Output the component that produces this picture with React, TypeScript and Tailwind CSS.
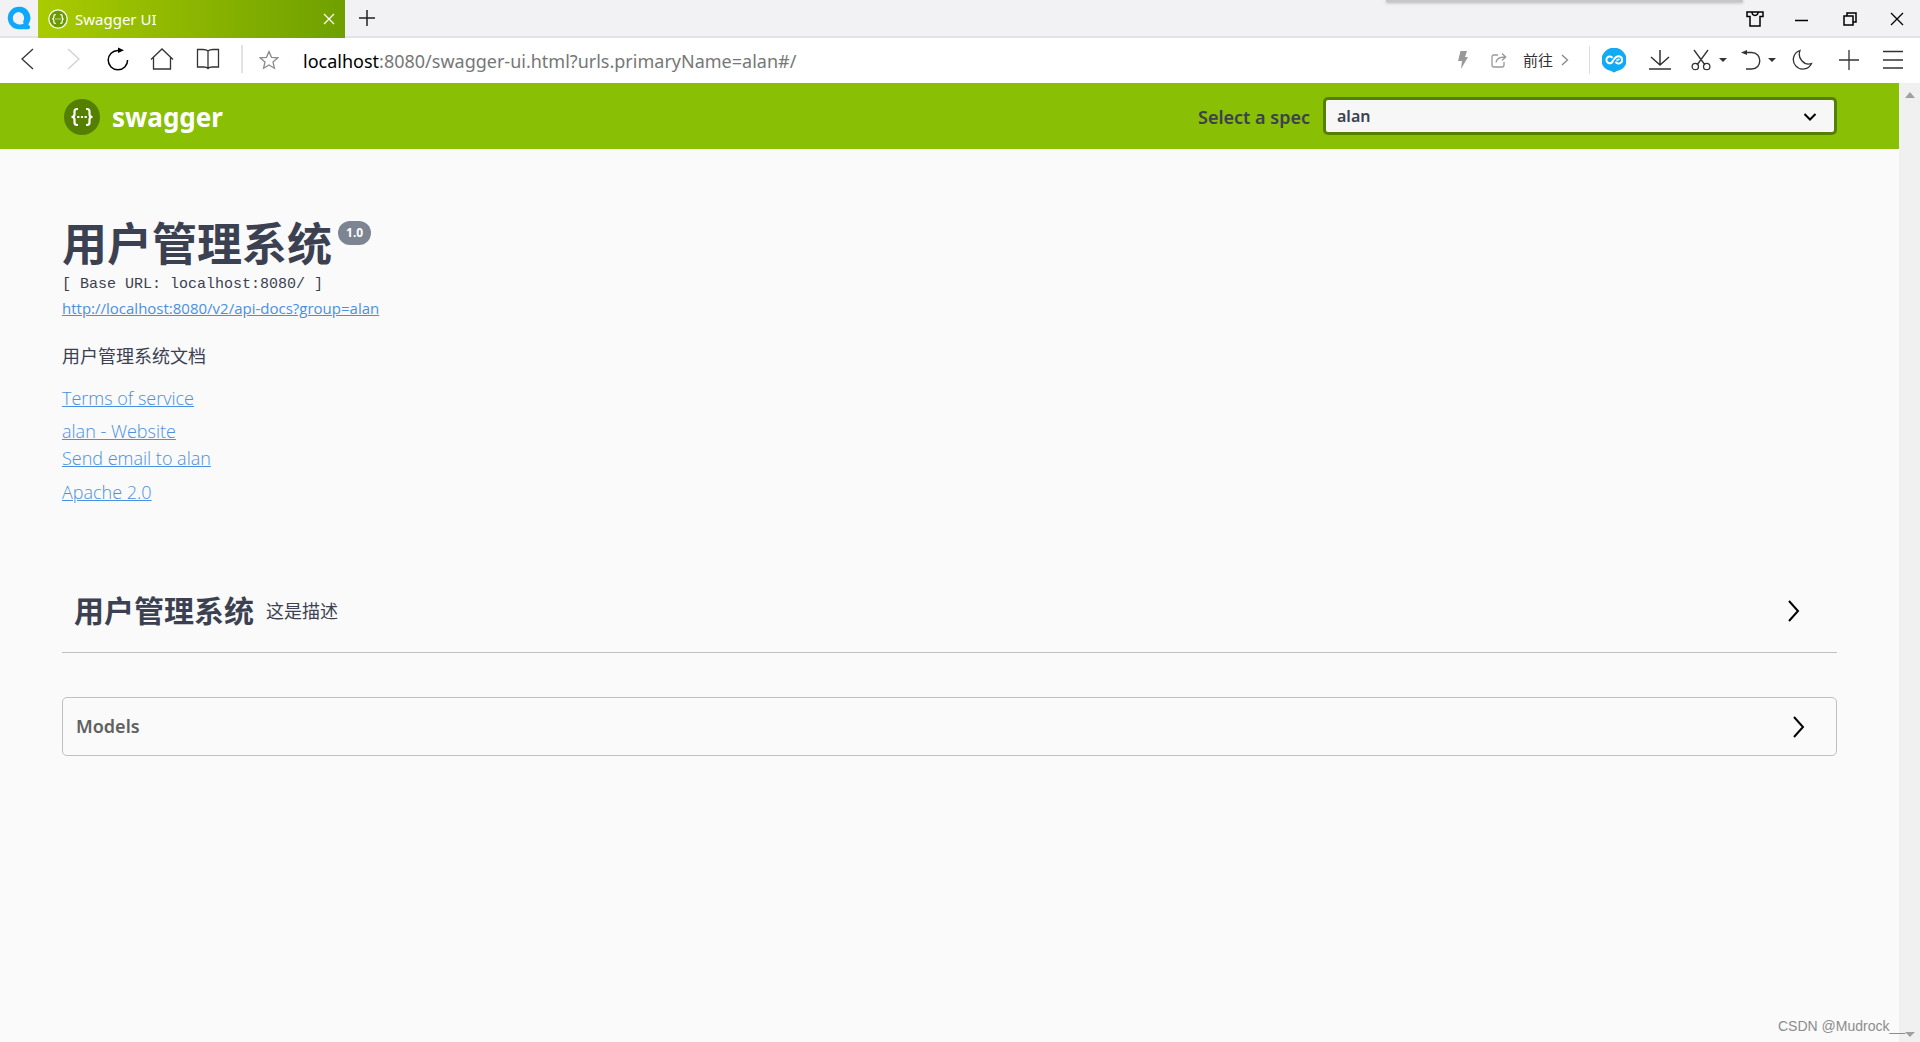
import React from "react";

const latin = "font-['Open_Sans','Noto_Sans_CJK_SC',sans-serif]";

function IconButton({ label, className, children }: { label: string; className: string; children: React.ReactNode }) {
  return (
    <button type="button" aria-label={label} className={`flex h-8 shrink-0 items-center justify-center ${className}`}>
      {children}
    </button>
  );
}

function Stroke({ w, h, d, className, width = 1.3 }: { w: number; h: number; d: string; className?: string; width?: number }) {
  return (
    <svg width={w} height={h} viewBox={`0 0 ${w} ${h}`} fill="none" stroke="currentColor" strokeWidth={width} className={className}>
      <path d={d} />
    </svg>
  );
}

function Braces({ size, ring }: { size: number; ring?: boolean }) {
  return (
    <svg width={size} height={size} viewBox="0 0 36 36" fill="none" stroke="#fff" strokeWidth="2.2">
      <circle cx="18" cy="18" r={ring ? 16.5 : 18} fill={ring ? "#6d9a00" : "#547f00"} stroke={ring ? "#fff" : "none"} />
      <path d="M14 10H13Q10.500 10 10.500 12.500V15.500Q10.500 18 7.500 18Q10.500 18 10.500 20.500V23.500Q10.500 26 13 26H14" />
      <path d="M22 10H23Q25.500 10 25.500 12.500V15.500Q25.500 18 28.500 18Q25.500 18 25.500 20.500V23.500Q25.500 26 23 26H22" />
      <path d="M13.200 18h2.200M16.900 18h2.200M20.600 18h2.200" />
    </svg>
  );
}

function TabBar() {
  return (
    <div className="relative flex h-[38px] border-b-2 border-[#e4e4e6] bg-[#f2f2f4]">
      <div className="flex w-[38px] items-center justify-center">
        <svg width="24" height="24" viewBox="0 0 24 24">
          <path d="M12 .8a11.200 11.200 0 1 0 0 22.400h9c2.300 0 2.800-2.200 1.300-3.700l-1-1A11.200 11.200 0 0 0 12 .8z" fill="#0fa8fd" />
          <path d="M12 6a6.200 6.200 0 1 0 0 12.400c1.500 0 3 0 4-.4 1.200-.5.300-1.600 0-2.400A6.200 6.200 0 0 0 12 6z" fill="#f2f2f4" />
        </svg>
      </div>
      <div className="flex h-[38px] w-[307px] shrink-0 items-center bg-linear-to-r from-[#a9cb00] to-[#6fa000] pr-[10px] pl-[10px] text-white">
        <Braces size={20} ring />
        <span className="ml-[7px] flex-1 font-['Noto_Sans',sans-serif] text-[15px]">Swagger UI</span>
        <button type="button" aria-label="Close tab">
          <Stroke w={12} h={12} d="M1 1l10 10M11 1L1 11" />
        </button>
      </div>
      <IconButton label="New tab" className="ml-[13px] h-9 text-[#222]">
        <Stroke w={18} h={18} d="M9 1v16M1 9h16" width={1.5} />
      </IconButton>
      <div className="absolute top-0 right-[177px] h-[2px] w-[357px] bg-[#c6c6c8] shadow-[0_1px_3px_#aaa]" />
      <div className="ml-auto flex h-[38px] items-center text-black">
        <IconButton label="Skins" className="mr-[31px]">
          <Stroke w={18} h={16} d="M1 1h16v4.500h-3V15H4V5.500H1zM6 1c0 4.500 6 4.500 6 0" width={1.5} />
        </IconButton>
        <IconButton label="Minimize" className="mr-[35px]">
          <Stroke w={13} h={16} d="M0 9.500h13" width={1.5} />
        </IconButton>
        <IconButton label="Restore" className="mr-[33px]">
          <Stroke w={14} h={14} d="M1 4h9v9H1zM4 4V1h9v9h-3" width={1.5} />
        </IconButton>
        <IconButton label="Close" className="mr-4">
          <Stroke w={14} h={14} d="M1 1l12 12M13 1L1 13" />
        </IconButton>
      </div>
    </div>
  );
}

function NavBar() {
  return (
    <div className="flex h-[45px] items-center bg-white pb-[3px] text-[#333]">
      <IconButton label="Back" className="ml-[21px]">
        <Stroke w={13} h={22} d="M12 1L1 11l11 10" />
      </IconButton>
      <IconButton label="Forward" className="ml-[33px] text-[#d0d0d0]">
        <Stroke w={13} h={22} d="M1 1l11 10L1 21" />
      </IconButton>
      <IconButton label="Reload" className="ml-[26px] text-black">
        <svg width="24" height="24" viewBox="0 0 24 24" fill="none" stroke="currentColor" strokeWidth="1.500">
          <path d="M15 3.400H12A9.700 9.700 0 1 0 21.600 13" />
          <path d="M12 .5l6 2.700-6 2.800z" fill="currentColor" stroke="none" />
        </svg>
      </IconButton>
      <IconButton label="Home" className="ml-[20px]">
        <Stroke w={24} h={24} d="M1 12.500L12 2l11 10.500M3.500 10.500V22h17V10.500" />
      </IconButton>
      <IconButton label="Reading list" className="ml-[22px]">
        <Stroke w={24} h={24} d="M12 4C10.500 2.600 9 2.500 7 2.500H1.500V20H8c2 0 3 .5 4 1.500 1-1 2-1.500 4-1.500h6.500V2.500H17c-2 0-3.500.1-5 1.500zv17" />
      </IconButton>
      <div className="ml-[21px] h-7 w-[2px] bg-[#e2e2e2]" />
      <IconButton label="Bookmark" className="ml-[16px] pt-[2px] text-[#8a8a8a]">
        <Stroke w={20} h={20} d="M10 1.500l2.500 5.800 6.200.6-4.700 4.100 1.400 6.200L10 15l-5.400 3.200L6 12 1.300 7.900l6.200-.6z" />
      </IconButton>
      <div className="ml-[24px] pt-[5px] font-['Noto_Sans',sans-serif] text-[18px] text-[#777]">
        <span className="text-black">localhost</span>:8080/swagger-ui.html?urls.primaryName=alan#/
      </div>
      <div className="ml-auto flex items-center pt-[2px]">
        <svg width="10" height="18" viewBox="0 0 10 18" fill="#999">
          <path d="M2.500 0H9L7 6h3L3 18l1-8H0z" />
        </svg>
        <IconButton label="Share" className="ml-[23px] text-[#999]">
          <Stroke w={16} h={16} d="M7 3H3Q1 3 1 5v8q0 2 2 2h8q2 0 2-2v-3M5 10.500C5.500 6.500 8 5 14 5M11 1.500L14.700 5 11 8.500" />
        </IconButton>
        <button type="button" className="ml-[16px] flex items-center font-['Noto_Sans_CJK_SC',sans-serif] text-[15px] text-[#333]">
          前往
          <Stroke w={8} h={12} d="M1 1l5.500 5L1 11" className="ml-2 text-[#888]" />
        </button>
        <div className="ml-[20px] h-7 w-px bg-[#ddd]" />
        <IconButton label="Infinity" className="ml-[12px]">
          <svg width="24" height="26" viewBox="0 0 24 26" fill="none">
            <path d="M9 1h6q6 1.500 9 8v8q-2.500 5.500-9 7l-3 1.500L9 24q-6.500-1.500-9-7V9Q3 2.500 9 1z" fill="#10aaf5" />
            <path d="M10.800 14.500A3.400 3.400 0 1 1 10.500 10.800M9.500 15.500C12 13.500 12.500 9.300 16.500 9.300a3.600 3.600 0 1 1-3.100 5.400M14.500 13.500l3-1.500" stroke="#fff" strokeWidth="1.900" />
          </svg>
        </IconButton>
        <IconButton label="Downloads" className="ml-[23px]">
          <Stroke w={22} h={22} d="M11 1v15M2 8l9 8 9-8M0 20h22" width={1.5} />
        </IconButton>
        <IconButton label="Screenshot" className="ml-[20px]">
          <Stroke w={20} h={24} d="M3 2l11 15M17 2L6 17M7.500 18.500a3.200 3.200 0 1 1-6.400 0 3.200 3.200 0 0 1 6.400 0zM18.900 18.500a3.200 3.200 0 1 1-6.400 0 3.200 3.200 0 0 1 6.400 0z" width={1.3} />
          <svg width="8" height="4" className="ml-[8px]" fill="currentColor"><path d="M0 0h8L4 4z" /></svg>
        </IconButton>
        <IconButton label="Undo close" className="ml-[14px]">
          <svg width="20" height="22" viewBox="0 0 20 22" fill="none" stroke="currentColor" strokeWidth="1.400">
            <path d="M4 3.500h6.500c11 0 11 16.500 0 16.500H5" />
            <path d="M6 1L0 3.500 6 6z" fill="currentColor" stroke="none" />
          </svg>
          <svg width="8" height="4" className="ml-[7px]" fill="currentColor"><path d="M0 0h8L4 4z" /></svg>
        </IconButton>
        <IconButton label="Night mode" className="ml-[16px]">
          <Stroke w={22} h={22} d="M8 1.500C5 9 12 17 19.500 14.500A9.500 9.500 0 1 1 8 1.500z" width={1.3} />
        </IconButton>
        <IconButton label="Add" className="ml-[25px]">
          <Stroke w={20} h={20} d="M10 0v20M0 10h20" />
        </IconButton>
        <IconButton label="Menu" className="mr-[17px] ml-[24px]">
          <Stroke w={20} h={20} d="M0 1.500h20M0 10h20M0 18h20" width={1.5} />
        </IconButton>
      </div>
    </div>
  );
}

function Header() {
  return (
    <header className="flex h-[66px] items-center justify-between bg-[#89bf04] px-[62px]">
      <a href="#/" className="flex items-center pt-[2px] pl-[2px]">
        <Braces size={36} />
        <span className="ml-[12px] font-['Noto_Sans',sans-serif] text-[26px] font-bold text-white">swagger</span>
      </a>
      <div className="flex items-center">
        <label htmlFor="spec" className="mr-[13px] pt-[2px] font-['Noto_Sans',sans-serif] text-[18px] font-semibold text-[#3b4151]">Select a spec</label>
        <div className="relative">
          <select id="spec" className="h-[38px] w-[514px] appearance-none rounded-[5px] border-3 border-[#547f00] bg-[#f7f7f7] px-[11px] font-['Noto_Sans',sans-serif] text-[16px] font-semibold text-[#3b4151]">
            <option>alan</option>
          </select>
          <Stroke w={14} h={10} d="M1.500 2L7 7.500 12.500 2" width={2} className="pointer-events-none absolute top-[15px] right-[20px] text-black" />
        </div>
      </div>
    </header>
  );
}

const link = "block w-fit text-[#4990e2] underline";

function Info() {
  return (
    <section className="text-[#3b4151]">
      <div className="flex items-start">
        <h1 className="text-[45px] leading-[60px] font-bold">用户管理系统</h1>
        <span className="mt-[7px] ml-[6px] rounded-full bg-[#7d8492] px-[8px] text-[12px] leading-6 font-bold text-white">1.0</span>
      </div>
      <pre className="font-['Liberation_Mono',monospace] text-[15px] leading-[22px] font-light">[ Base URL: localhost:8080/ ]</pre>
      <a href="#/api-docs" className={`${link} text-[15px] leading-[24px]`}>http://localhost:8080/v2/api-docs?group=alan</a>
      <p className="mt-[24px] text-[18px] leading-[24px]">用户管理系统文档</p>
      <div className="mt-[17px] text-[18px] leading-[27px] font-light">
        <a href="#/terms" className={link}>Terms of service</a>
        <a href="#/website" className={`${link} mt-[6px]`}>alan - Website</a>
        <a href="#/email" className={link}>Send email to alan</a>
        <a href="#/license" className={`${link} mt-[7px]`}>Apache 2.0</a>
      </div>
    </section>
  );
}

function Chevron() {
  return <Stroke w={14} h={24} d="M2 2l9 10-9 10" width={2} className="text-black" />;
}

export default function App() {
  return (
    <div className={`flex min-h-screen flex-col bg-[#fafafa] ${latin}`}>
      <TabBar />
      <NavBar />
      <div className="flex flex-1">
        <div className="min-w-0 flex-1">
          <Header />
          <main className="px-[62px] pt-[65px]">
            <Info />
            <button type="button" className="mt-[74px] flex w-full items-center border-b border-[#bebec8] px-[12px] pt-[11px] pb-[21px] text-left text-[#3b4151]">
              <span className="text-[30px] leading-[40px] font-bold">用户管理系统</span>
              <span className="ml-[12px] flex-1 text-[18px]">这是描述</span>
              <span className="mr-[24px]"><Chevron /></span>
            </button>
            <button type="button" className="mt-[44px] flex h-[59px] w-full items-center justify-between rounded-[5px] border border-[#bebec3] pr-[30px] pl-[13px] text-[#606060]">
              <span className="font-['Noto_Sans',sans-serif] text-[18px] font-semibold">Models</span>
              <Chevron />
            </button>
          </main>
        </div>
        <div className="flex w-[21px] flex-col items-center justify-between bg-[#f0f0f0] pt-[9px] pb-[5px]">
          <svg width="10" height="6" fill="#a0a0a0"><path d="M0 6l5-6 5 6z" /></svg>
          <svg width="10" height="5" fill="#a0a0a0"><path d="M0 0h10L5 5z" /></svg>
        </div>
      </div>
      <div className="absolute right-[15px] bottom-[5px] font-['Liberation_Sans',sans-serif] text-[14px] text-[#8c8c8c]">CSDN @Mudrock__</div>
    </div>
  );
}
